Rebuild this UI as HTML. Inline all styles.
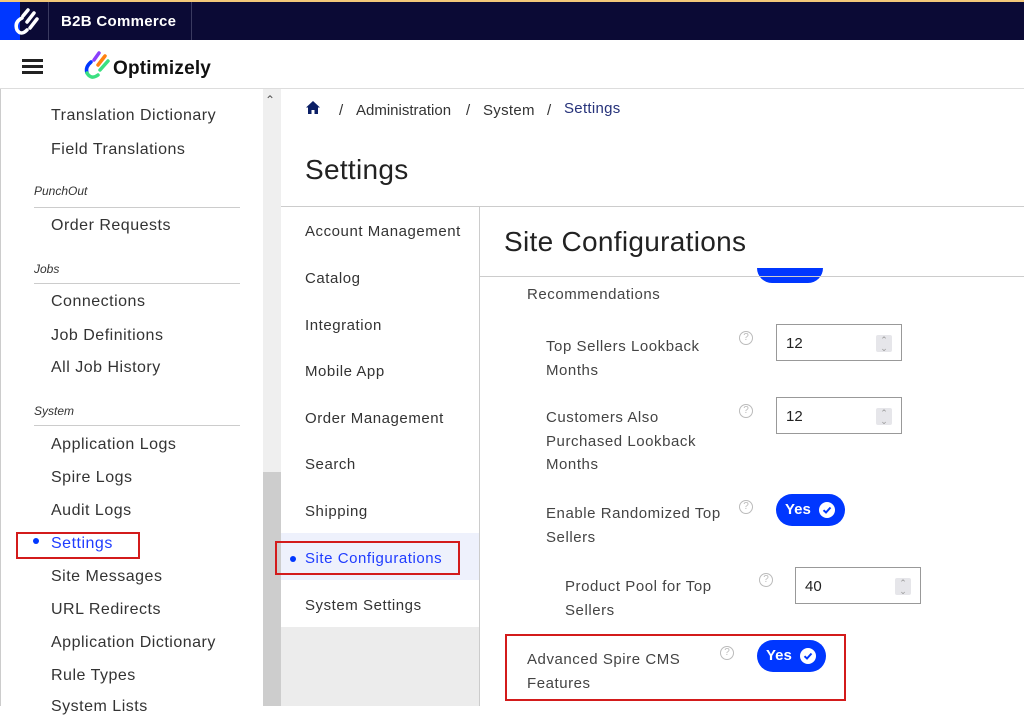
<!DOCTYPE html>
<html><head><meta charset="utf-8"><style>
*{margin:0;padding:0;box-sizing:border-box}
body{width:1024px;height:706px;overflow:hidden;position:relative;font-family:"Liberation Sans",sans-serif;background:#fff;color:#333}
.a{position:absolute}
.t{position:absolute;line-height:20px;white-space:nowrap;font-size:16px;color:#333;margin-top:2px;letter-spacing:0.5px}
.m{font-size:15px;color:#333;letter-spacing:0.55px}
.sec{font-size:12px;font-style:italic;color:#333;letter-spacing:0}
.hr{position:absolute;height:1px;background:#ccc}
.in{position:absolute;border:1px solid #999;background:#fff;font-size:15px;color:#222;padding:10px 0 0 9px;width:126px;height:37px}
.in i{position:absolute;right:9px;top:10px;width:16px;height:17px;background:#e6e6ea;border-radius:2px;font-style:normal;font-size:9px;line-height:8px;text-align:center;color:#999;padding-top:1px}
.tg{position:absolute;width:69px;height:32px;border-radius:16px;background:#0037ff;color:#fff;font-weight:bold;font-size:15px;line-height:32px;padding-left:9px}
.tg svg{position:absolute;right:10px;top:8px}
.q{position:absolute;width:14px;height:14px;border:1px solid #bbb;border-radius:50%;font-size:10px;color:#bbb;text-align:center;line-height:12px}
.red{position:absolute;border:2px solid #d31b1b}
</style></head><body>
<div class="a" style="left:0;top:0;width:1024px;height:40px;background:#0b0a35"></div>
<div class="a" style="left:0;top:0;width:1024px;height:2px;background:#f3c879"></div>
<div class="a" style="left:0;top:2px;width:20px;height:38px;background:#0037ff"></div>
<svg class="a" style="left:8px;top:6px" width="32" height="32" viewBox="0 0 32 32"><path d="M14 12 Q6 16 9 24 Q13 30 19 24" stroke="#fff" stroke-width="3.5" fill="none" stroke-linecap="round"/><path d="M15 10 L20 4 M19 16 L26 7 M22 22 L29 13" stroke="#fff" stroke-width="3.5" stroke-linecap="round"/></svg>
<div class="a" style="left:48px;top:2px;width:1px;height:38px;background:#3a3a60"></div>
<div class="a" style="left:191px;top:2px;width:1px;height:38px;background:#3a3a60"></div>
<div class="t" style="left:61px;top:10px;color:#fff;font-weight:bold;font-size:15px;letter-spacing:0.3px">B2B Commerce</div>
<div class="a" style="left:22px;top:59px;width:21px;height:3px;background:#222"></div>
<div class="a" style="left:22px;top:65px;width:21px;height:3px;background:#222"></div>
<div class="a" style="left:22px;top:71px;width:21px;height:3px;background:#222"></div>
<svg class="a" style="left:82px;top:50px" width="30" height="30" viewBox="0 0 30 30"><path d="M9 12 Q3 17 5 23" stroke="#0037ff" stroke-width="3.5" fill="none" stroke-linecap="round"/><path d="M5 23 Q9 30 16 25" stroke="#3be081" stroke-width="3.5" fill="none" stroke-linecap="round"/><path d="M12 10 L17 3" stroke="#8a3ffc" stroke-width="3.5" stroke-linecap="round"/><path d="M16 15 L23 6" stroke="#ff8110" stroke-width="3.5" stroke-linecap="round"/><path d="M18 20 L26 11" stroke="#3be081" stroke-width="3.5" stroke-linecap="round"/></svg>
<div class="t" style="left:113px;top:57px;font-size:19px;font-weight:bold;color:#111;letter-spacing:0.2px">Optimizely</div>
<div class="hr" style="left:0;top:88px;width:1024px;background:#ddd"></div>
<div class="a" style="left:0;top:89px;width:1px;height:617px;background:#ccc"></div>
<div class="a" style="left:263px;top:89px;width:18px;height:617px;background:#efefef"></div>
<div class="a" style="left:263px;top:472px;width:18px;height:234px;background:#cdcdcd"></div>
<div class="t" style="left:265px;top:88px;font-size:12px;color:#555">&#8963;</div>
<div class="t" style="left:51px;top:104px">Translation Dictionary</div>
<div class="t" style="left:51px;top:138px">Field Translations</div>
<div class="t sec" style="left:34px;top:179px">PunchOut</div>
<div class="hr" style="left:34px;top:207px;width:206px"></div>
<div class="t" style="left:51px;top:214px">Order Requests</div>
<div class="t sec" style="left:34px;top:257px">Jobs</div>
<div class="hr" style="left:34px;top:283px;width:206px"></div>
<div class="t" style="left:51px;top:290px">Connections</div>
<div class="t" style="left:51px;top:324px">Job Definitions</div>
<div class="t" style="left:51px;top:356px">All Job History</div>
<div class="t sec" style="left:34px;top:399px">System</div>
<div class="hr" style="left:34px;top:425px;width:206px"></div>
<div class="t" style="left:51px;top:433px">Application Logs</div>
<div class="t" style="left:51px;top:466px">Spire Logs</div>
<div class="t" style="left:51px;top:499px">Audit Logs</div>
<div class="a" style="left:33px;top:538px;width:6px;height:6px;border-radius:50%;background:#0037ff"></div>
<div class="t" style="left:51px;top:532px;color:#1f3cff">Settings</div>
<div class="red" style="left:16px;top:532px;width:124px;height:27px"></div>
<div class="t" style="left:51px;top:565px">Site Messages</div>
<div class="t" style="left:51px;top:598px">URL Redirects</div>
<div class="t" style="left:51px;top:631px">Application Dictionary</div>
<div class="t" style="left:51px;top:664px">Rule Types</div>
<div class="t" style="left:51px;top:695px">System Lists</div>
<svg class="a" style="left:306px;top:101px" width="14" height="13" viewBox="0 0 14 13"><path d="M7 0 L14 6.5 H12 V13 H8.5 V9 H5.5 V13 H2 V6.5 H0 Z" fill="#0b1f66"/></svg>
<div class="t m" style="left:339px;top:99px">/</div>
<div class="t m" style="left:356px;top:99px;letter-spacing:0">Administration</div>
<div class="t m" style="left:466px;top:99px">/</div>
<div class="t m" style="left:483px;top:99px;letter-spacing:0.3px">System</div>
<div class="t m" style="left:547px;top:99px">/</div>
<div class="t m" style="left:564px;top:97px;color:#26327a;letter-spacing:0.3px">Settings</div>
<div class="t" style="left:305px;top:151px;font-size:28px;line-height:34px;color:#222;letter-spacing:0.3px">Settings</div>
<div class="hr" style="left:281px;top:206px;width:743px"></div>
<div class="a" style="left:281px;top:627px;width:198px;height:79px;background:#ececec"></div>
<div class="a" style="left:281px;top:533px;width:198px;height:47px;background:#eef1fc"></div>
<div class="a" style="left:479px;top:207px;width:1px;height:499px;background:#ccc"></div>
<div class="t m" style="left:305px;top:220px">Account Management</div>
<div class="t m" style="left:305px;top:267px">Catalog</div>
<div class="t m" style="left:305px;top:314px">Integration</div>
<div class="t m" style="left:305px;top:360px">Mobile App</div>
<div class="t m" style="left:305px;top:407px">Order Management</div>
<div class="t m" style="left:305px;top:453px">Search</div>
<div class="t m" style="left:305px;top:500px">Shipping</div>
<div class="a" style="left:290px;top:556px;width:6px;height:6px;border-radius:50%;background:#0037ff"></div>
<div class="t m" style="left:305px;top:547px;color:#1f3cff">Site Configurations</div>
<div class="red" style="left:275px;top:541px;width:185px;height:34px"></div>
<div class="t m" style="left:305px;top:594px">System Settings</div>
<div class="t" style="left:504px;top:223px;font-size:28px;line-height:34px;color:#222;letter-spacing:0.3px">Site Configurations</div>
<div class="a" style="left:757px;top:268px;width:66px;height:15px;border-radius:0 0 16px 16px;background:#0037ff"></div>
<div class="hr" style="left:480px;top:276px;width:544px"></div>
<div class="t m" style="left:527px;top:283px;color:#444">Recommendations</div>
<div class="t m" style="left:546px;top:333px;color:#444;line-height:24px">Top Sellers Lookback<br>Months</div>
<div class="q" style="left:739px;top:331px">?</div>
<div class="in" style="left:776px;top:324px">12<i>&#8963;<br>&#8964;</i></div>
<div class="t m" style="left:546px;top:404px;color:#444;line-height:23.5px">Customers Also<br>Purchased Lookback<br>Months</div>
<div class="q" style="left:739px;top:404px">?</div>
<div class="in" style="left:776px;top:397px">12<i>&#8963;<br>&#8964;</i></div>
<div class="t m" style="left:546px;top:500px;color:#444;line-height:24px">Enable Randomized Top<br>Sellers</div>
<div class="q" style="left:739px;top:500px">?</div>
<div class="tg" style="left:776px;top:494px">Yes<svg width="16" height="16" viewBox="0 0 16 16"><circle cx="8" cy="8" r="8" fill="#fff"/><path d="M4.5 8.2 L7 10.5 L11.5 5.5" stroke="#0037ff" stroke-width="2" fill="none"/></svg></div>
<div class="t m" style="left:565px;top:573px;color:#444;line-height:24px">Product Pool for Top<br>Sellers</div>
<div class="q" style="left:759px;top:573px">?</div>
<div class="in" style="left:795px;top:567px">40<i>&#8963;<br>&#8964;</i></div>
<div class="t m" style="left:527px;top:646px;color:#444;line-height:23.5px">Advanced Spire CMS<br>Features</div>
<div class="q" style="left:720px;top:646px">?</div>
<div class="tg" style="left:757px;top:640px">Yes<svg width="16" height="16" viewBox="0 0 16 16"><circle cx="8" cy="8" r="8" fill="#fff"/><path d="M4.5 8.2 L7 10.5 L11.5 5.5" stroke="#0037ff" stroke-width="2" fill="none"/></svg></div>
<div class="red" style="left:505px;top:634px;width:341px;height:67px"></div>
</body></html>
